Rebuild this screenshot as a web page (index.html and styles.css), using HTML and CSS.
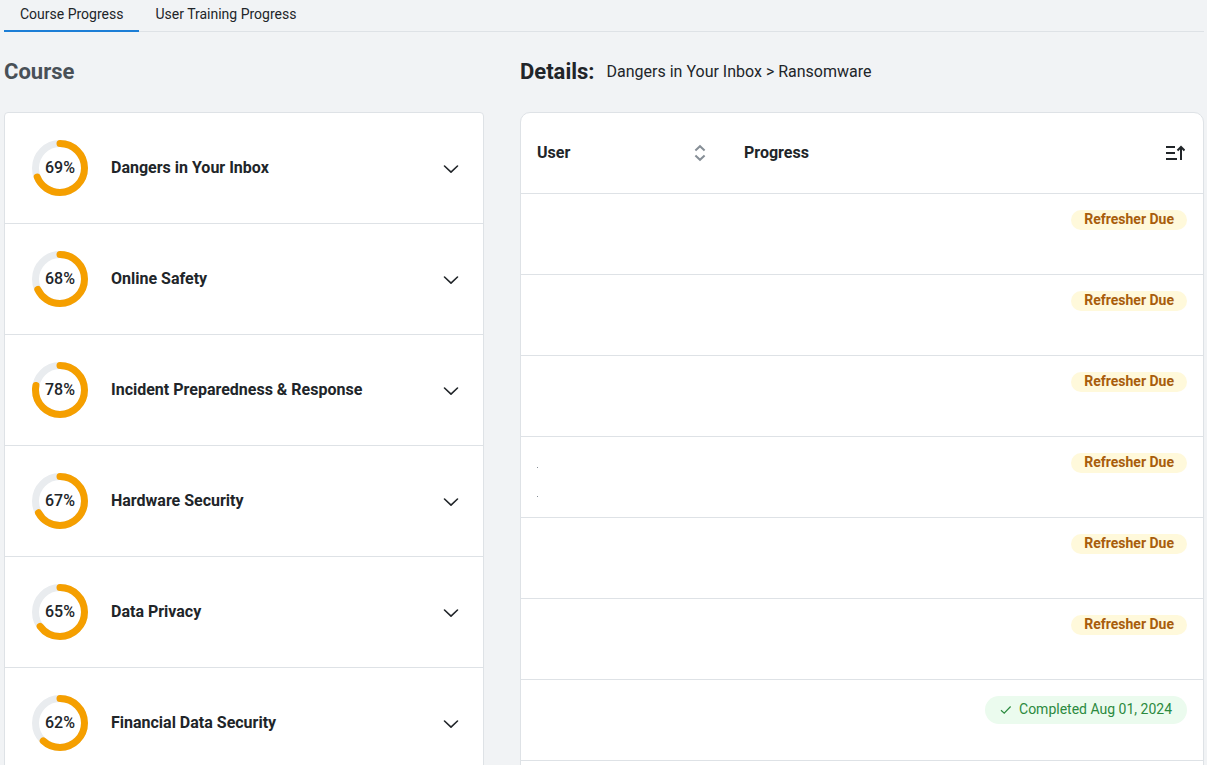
FILE: index.html
```html
<!DOCTYPE html>
<html lang="en">
  <head>
    <meta charset="UTF-8" />
    <meta name="viewport" content="width=device-width, initial-scale=1.0" />
    <title>Course Progress</title>
    <link rel="stylesheet" href="styles.css">
  </head>
  <body>
    <svg class="sprite" aria-hidden="true">
      <symbol id="chevron" viewBox="0 0 16 16">
        <path d="M1.5 6 L8 12.2 L14.5 6" fill="none" stroke="currentColor" stroke-width="1.6" stroke-linecap="round" stroke-linejoin="round" />
      </symbol>
    </svg>
    <div class="page">
      <nav class="tabs" role="tablist">
        <button class="tab active" role="tab" aria-selected="true">Course Progress</button>
        <button class="tab" role="tab" aria-selected="false">User Training Progress</button>
      </nav>

      <main class="columns">
        <section>
          <div class="heading">
            <h2 class="course-title">Course</h2>
          </div>
          <div class="course-list">
            <button class="course">
              <span class="ring">
                <svg viewBox="0 0 56 56" aria-hidden="true">
                  <circle class="track" cx="28" cy="28" r="24.5" />
                  <circle class="value" cx="28" cy="28" r="24.5" pathLength="100" stroke-dasharray="69 100" />
                </svg>
                <span class="percent">69%</span>
              </span>
              <span class="course-name">Dangers in Your Inbox</span>
              <svg class="chevron" aria-hidden="true"><use href="#chevron" /></svg>
            </button>
            <button class="course">
              <span class="ring">
                <svg viewBox="0 0 56 56" aria-hidden="true">
                  <circle class="track" cx="28" cy="28" r="24.5" />
                  <circle class="value" cx="28" cy="28" r="24.5" pathLength="100" stroke-dasharray="68 100" />
                </svg>
                <span class="percent">68%</span>
              </span>
              <span class="course-name">Online Safety</span>
              <svg class="chevron" aria-hidden="true"><use href="#chevron" /></svg>
            </button>
            <button class="course">
              <span class="ring">
                <svg viewBox="0 0 56 56" aria-hidden="true">
                  <circle class="track" cx="28" cy="28" r="24.5" />
                  <circle class="value" cx="28" cy="28" r="24.5" pathLength="100" stroke-dasharray="78 100" />
                </svg>
                <span class="percent">78%</span>
              </span>
              <span class="course-name">Incident Preparedness &amp; Response</span>
              <svg class="chevron" aria-hidden="true"><use href="#chevron" /></svg>
            </button>
            <button class="course">
              <span class="ring">
                <svg viewBox="0 0 56 56" aria-hidden="true">
                  <circle class="track" cx="28" cy="28" r="24.5" />
                  <circle class="value" cx="28" cy="28" r="24.5" pathLength="100" stroke-dasharray="67 100" />
                </svg>
                <span class="percent">67%</span>
              </span>
              <span class="course-name">Hardware Security</span>
              <svg class="chevron" aria-hidden="true"><use href="#chevron" /></svg>
            </button>
            <button class="course">
              <span class="ring">
                <svg viewBox="0 0 56 56" aria-hidden="true">
                  <circle class="track" cx="28" cy="28" r="24.5" />
                  <circle class="value" cx="28" cy="28" r="24.5" pathLength="100" stroke-dasharray="65 100" />
                </svg>
                <span class="percent">65%</span>
              </span>
              <span class="course-name">Data Privacy</span>
              <svg class="chevron" aria-hidden="true"><use href="#chevron" /></svg>
            </button>
            <button class="course">
              <span class="ring">
                <svg viewBox="0 0 56 56" aria-hidden="true">
                  <circle class="track" cx="28" cy="28" r="24.5" />
                  <circle class="value" cx="28" cy="28" r="24.5" pathLength="100" stroke-dasharray="62 100" />
                </svg>
                <span class="percent">62%</span>
              </span>
              <span class="course-name">Financial Data Security</span>
              <svg class="chevron" aria-hidden="true"><use href="#chevron" /></svg>
            </button>
          </div>
        </section>

        <section>
          <div class="heading">
            <h2>Details:</h2>
            <span>Dangers in Your Inbox &gt; Ransomware</span>
          </div>
          <div class="table-card">
            <table>
              <thead>
                <tr>
                  <th class="user-col">
                    <button class="sort">
                      User
                      <svg class="sort-icon" viewBox="0 0 16 20" aria-hidden="true">
                        <path d="M3.4 7.4 L8 3.2 L12.6 7.4 M3.4 12.6 L8 16.8 L12.6 12.6" fill="none" stroke="#868e96" stroke-width="2" />
                      </svg>
                    </button>
                  </th>
                  <th>
                    <button class="sort">
                      Progress
                      <svg class="order-icon" viewBox="0 0 20 20" aria-hidden="true">
                        <path d="M1 4 H10 M1 10 H10 M1 16 H12 M16 17 V4 M12.5 7.5 L16 4 L19.5 7.5" fill="none" stroke="#212529" stroke-width="2" />
                      </svg>
                    </button>
                  </th>
                </tr>
              </thead>
              <tbody>
                <tr>
                  <td></td>
                  <td><span class="badge due">Refresher Due</span></td>
                </tr>
                <tr>
                  <td></td>
                  <td><span class="badge due">Refresher Due</span></td>
                </tr>
                <tr>
                  <td></td>
                  <td><span class="badge due">Refresher Due</span></td>
                </tr>
                <tr>
                  <td>
                    <div class="marks">
                      <i></i>
                      <i></i>
                    </div>
                  </td>
                  <td><span class="badge due">Refresher Due</span></td>
                </tr>
                <tr>
                  <td></td>
                  <td><span class="badge due">Refresher Due</span></td>
                </tr>
                <tr>
                  <td></td>
                  <td><span class="badge due">Refresher Due</span></td>
                </tr>
                <tr>
                  <td></td>
                  <td>
                    <span class="badge completed">
                      <svg class="check" viewBox="0 0 12 12" aria-hidden="true">
                        <path d="M1 7.3 L4.2 10.1 L10.6 3.5" fill="none" stroke="currentColor" stroke-width="1.2" />
                      </svg>
                      Completed Aug 01, 2024
                    </span>
                  </td>
                </tr>
                <tr>
                  <td></td>
                  <td></td>
                </tr>
              </tbody>
            </table>
          </div>
        </section>
      </main>
    </div>
  </body>
</html>
```
FILE: styles.css
```css
* {
  box-sizing: border-box;
}

body {
  margin: 0;
  background: #f1f3f5;
  color: #212529;
  font-family: Roboto, "Liberation Sans", sans-serif;
  font-size: 16px;
  line-height: 24px;
}

button {
  border: none;
  background: none;
  padding: 0;
  color: inherit;
  font: inherit;
  cursor: pointer;
}

.sprite {
  display: none;
}

.page {
  height: 100vh;
  overflow: hidden;
  padding: 0 3px 0 4px;
}

.tabs {
  display: flex;
  box-shadow: inset 0 -1px #dee2e6;
}

.tab {
  height: 32px;
  padding: 0 16px 2px;
  border-bottom: 2px solid transparent;
  font-size: 14px;
}

.tab.active {
  border-color: #1c7ed6;
}

.columns {
  display: grid;
  grid-template-columns: 40fr 57fr;
  gap: 36px;
}

.heading {
  display: flex;
  align-items: center;
  gap: 12px;
  height: 80px;
}

.heading h2 {
  margin: 0;
  font-size: 22px;
  font-weight: 700;
}

.heading .course-title {
  color: #495057;
}

.course-list {
  border: 1px solid #dee2e6;
  border-radius: 4px;
  background: #fff;
}

.course {
  display: flex;
  align-items: center;
  width: 100%;
  padding: 27px 24px 27px 27px;
  border-bottom: 1px solid #dee2e6;
  text-align: left;
}

.ring {
  display: grid;
  place-items: center;
  width: 56px;
  height: 56px;
}

.ring svg,
.percent {
  grid-area: 1 / 1;
}

.ring svg {
  width: 56px;
  height: 56px;
  transform: rotate(-90deg);
}

.ring circle {
  fill: none;
  stroke-width: 7;
}

.ring .track {
  stroke: #e9ecef;
}

.ring .value {
  stroke: #f59f00;
  stroke-linecap: round;
}

.percent {
  font-weight: 500;
}

.course-name {
  flex: 1;
  margin-left: 23px;
  font-weight: 700;
}

.chevron {
  width: 16px;
  height: 16px;
}

.table-card {
  border: 1px solid #dee2e6;
  border-radius: 10px;
  background: #fff;
}

table {
  width: 100%;
  border-collapse: separate;
  border-spacing: 0;
  table-layout: fixed;
}

th,
td {
  height: 81px;
  padding: 16px;
  border-bottom: 1px solid #dee2e6;
}

th {
  padding: 0 16px;
}

td {
  vertical-align: top;
  text-align: right;
  line-height: 0;
}

.user-col {
  width: 207px;
}

.sort {
  display: flex;
  justify-content: space-between;
  align-items: center;
  width: 100%;
  font-weight: 700;
}

.sort-icon {
  width: 16px;
  height: 20px;
  margin-right: 4px;
}

.order-icon {
  width: 20px;
  height: 20px;
  margin-right: 2px;
}

.marks {
  display: flex;
  flex-direction: column;
  gap: 28px;
  padding-top: 14px;
}

.marks i {
  width: 1px;
  height: 1px;
  background: #868e96;
}

.badge {
  display: inline-flex;
  align-items: center;
  gap: 7px;
  height: 20px;
  padding: 0 13px 2px;
  border-radius: 14px;
  font-size: 14px;
  line-height: 18px;
}

.due {
  background: #fff9db;
  color: #a85d0c;
  font-weight: 700;
}

.completed {
  height: 28px;
  padding: 0 15px 2px;
  background: #ebfbee;
  color: #2b8a3e;
}

.check {
  width: 12px;
  height: 12px;
}
```
